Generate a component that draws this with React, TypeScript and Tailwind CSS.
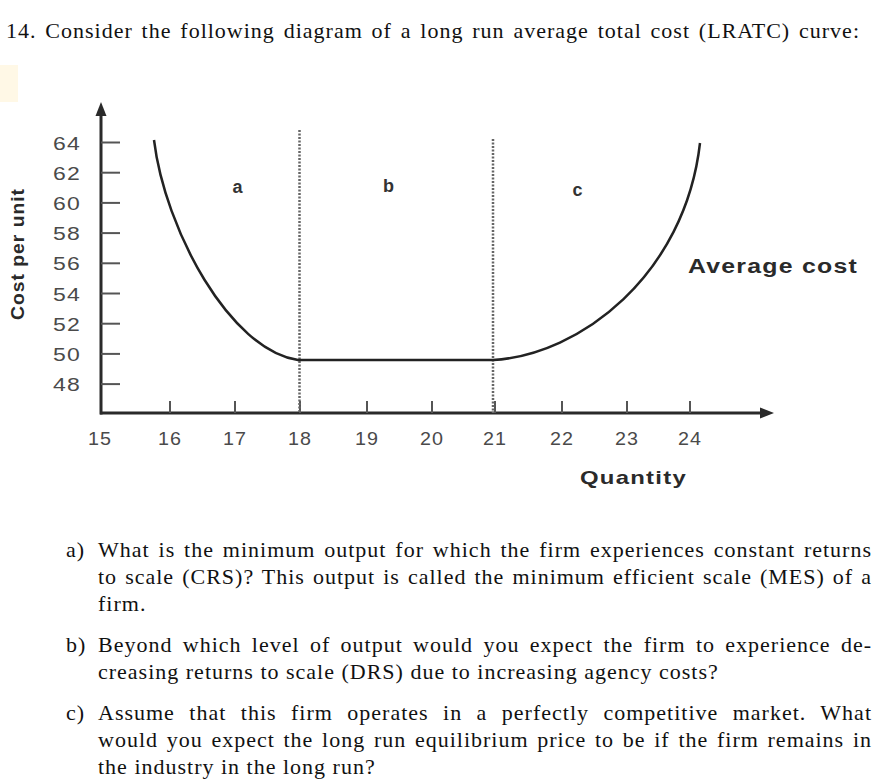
import React from 'react';

const yLabels = ['64', '62', '60', '58', '56', '54', '52', '50', '48'];
const xTicks = [
    { label: '15', x: 100 },
    { label: '16', x: 170 },
    { label: '17', x: 235 },
    { label: '18', x: 300 },
    { label: '19', x: 367 },
    { label: '20', x: 432 },
    { label: '21', x: 495 },
    { label: '22', x: 562 },
    { label: '23', x: 627 },
    { label: '24', x: 690 },
];

function CostChart() {
    return (
        <svg className="block" width="874" height="450" viewBox="0 50 874 450" fontFamily="'Liberation Sans', Arial, sans-serif">
            {/* faint highlight left over from the scan */}
            <rect x="0" y="65" width="18" height="37" fill="#fff8e6" />

            {/* y axis */}
            <line x1="101" y1="114" x2="101" y2="414.5" stroke="#2a2a2a" strokeWidth="3" />
            <polygon points="101,102 95.5,116 106.5,116" fill="#2a2a2a" />
            {yLabels.map((label, i) => {
                const y = 142.5 + i * 30.2;
                return (
                    <g key={label}>
                        <line x1="101" y1={y} x2="120" y2={y} stroke="#555" strokeWidth="2" />
                        <text x="81" y={y + 7} fontSize="19" fill="#4a4a4a" textAnchor="end" textLength="28" lengthAdjust="spacingAndGlyphs">
                            {label}
                        </text>
                    </g>
                );
            })}

            {/* x axis */}
            <line x1="100" y1="413" x2="762" y2="413" stroke="#2a2a2a" strokeWidth="3" />
            <polygon points="774,413 760,407.5 760,418.5" fill="#2a2a2a" />
            {xTicks.map((t, i) => (
                <g key={t.label}>
                    {i > 0 && <line x1={t.x} y1="401" x2={t.x} y2="413" stroke="#555" strokeWidth="2" />}
                    <text x={t.x} y="445" fontSize="19" fill="#4a4a4a" textAnchor="middle" textLength="24" lengthAdjust="spacingAndGlyphs">
                        {t.label}
                    </text>
                </g>
            ))}

            {/* region dividers */}
            <line x1="299.5" y1="130" x2="299.5" y2="413" stroke="#666" strokeWidth="2.5" strokeDasharray="2 1.5" />
            <line x1="493" y1="139" x2="493" y2="413" stroke="#666" strokeWidth="2.5" strokeDasharray="2 1.5" />

            {/* LRATC curve */}
            <path
                d="M154,140 C165,230 230,350 298,360 L493,360 C580,355 685,275 700,143"
                fill="none"
                stroke="#222"
                strokeWidth="2.5"
            />

            <text x="238" y="193" fontSize="18" fontWeight="bold" fill="#333" textAnchor="middle">a</text>
            <text x="389" y="192" fontSize="18" fontWeight="bold" fill="#333" textAnchor="middle">b</text>
            <text x="578" y="196" fontSize="18" fontWeight="bold" fill="#333" textAnchor="middle">c</text>

            <text x="688" y="273" fontSize="20" fontWeight="bold" fill="#2a2a2a" textLength="170" lengthAdjust="spacingAndGlyphs">
                Average cost
            </text>
            <text x="580" y="484" fontSize="19" fontWeight="bold" fill="#2a2a2a" textLength="107" lengthAdjust="spacingAndGlyphs">
                Quantity
            </text>
            <text
                x="0"
                y="0"
                fontSize="19"
                fontWeight="bold"
                fill="#2a2a2a"
                textAnchor="middle"
                textLength="132"
                lengthAdjust="spacingAndGlyphs"
                transform="translate(24 254) rotate(-90)"
            >
                Cost per unit
            </text>
        </svg>
    );
}

interface QuestionProps {
    label: string;
    lines: string[];
}

function Question({ label, lines }: QuestionProps) {
    return (
        <div className="flex pl-[66px]">
            <span className="w-[32px] shrink-0">{label}</span>
            <div className="w-[774px]">
                {lines.map((line, i) => (
                    <div
                        key={i}
                        className={
                            i < lines.length - 1
                                ? 'whitespace-nowrap text-justify [text-align-last:justify]'
                                : 'whitespace-nowrap text-left'
                        }
                    >
                        {line}
                    </div>
                ))}
            </div>
        </div>
    );
}

export default function App() {
    return (
        <div className="w-[874px] h-[784px] overflow-hidden bg-white text-[#111] font-['Liberation_Serif',serif] text-[22px] leading-[27px] tracking-[1px]">
            <div className="h-[50px] pt-[17px] pl-[6px]">
                <div className="w-[854px] whitespace-nowrap text-justify [text-align-last:justify]">
                    14. Consider the following diagram of a long run average total cost (LRATC) curve:
                </div>
            </div>

            <CostChart />

            <div className="mt-[36px] flex flex-col gap-[14px]">
                <Question
                    label="a)"
                    lines={[
                        'What is the minimum output for which the firm experiences constant returns',
                        'to scale (CRS)? This output is called the minimum efficient scale (MES) of a',
                        'firm.',
                    ]}
                />
                <Question
                    label="b)"
                    lines={[
                        'Beyond which level of output would you expect the firm to experience de-',
                        'creasing returns to scale (DRS) due to increasing agency costs?',
                    ]}
                />
                <Question
                    label="c)"
                    lines={[
                        'Assume that this firm operates in a perfectly competitive market.  What',
                        'would you expect the long run equilibrium price to be if the firm remains in',
                        'the industry in the long run?',
                    ]}
                />
            </div>
        </div>
    );
}
